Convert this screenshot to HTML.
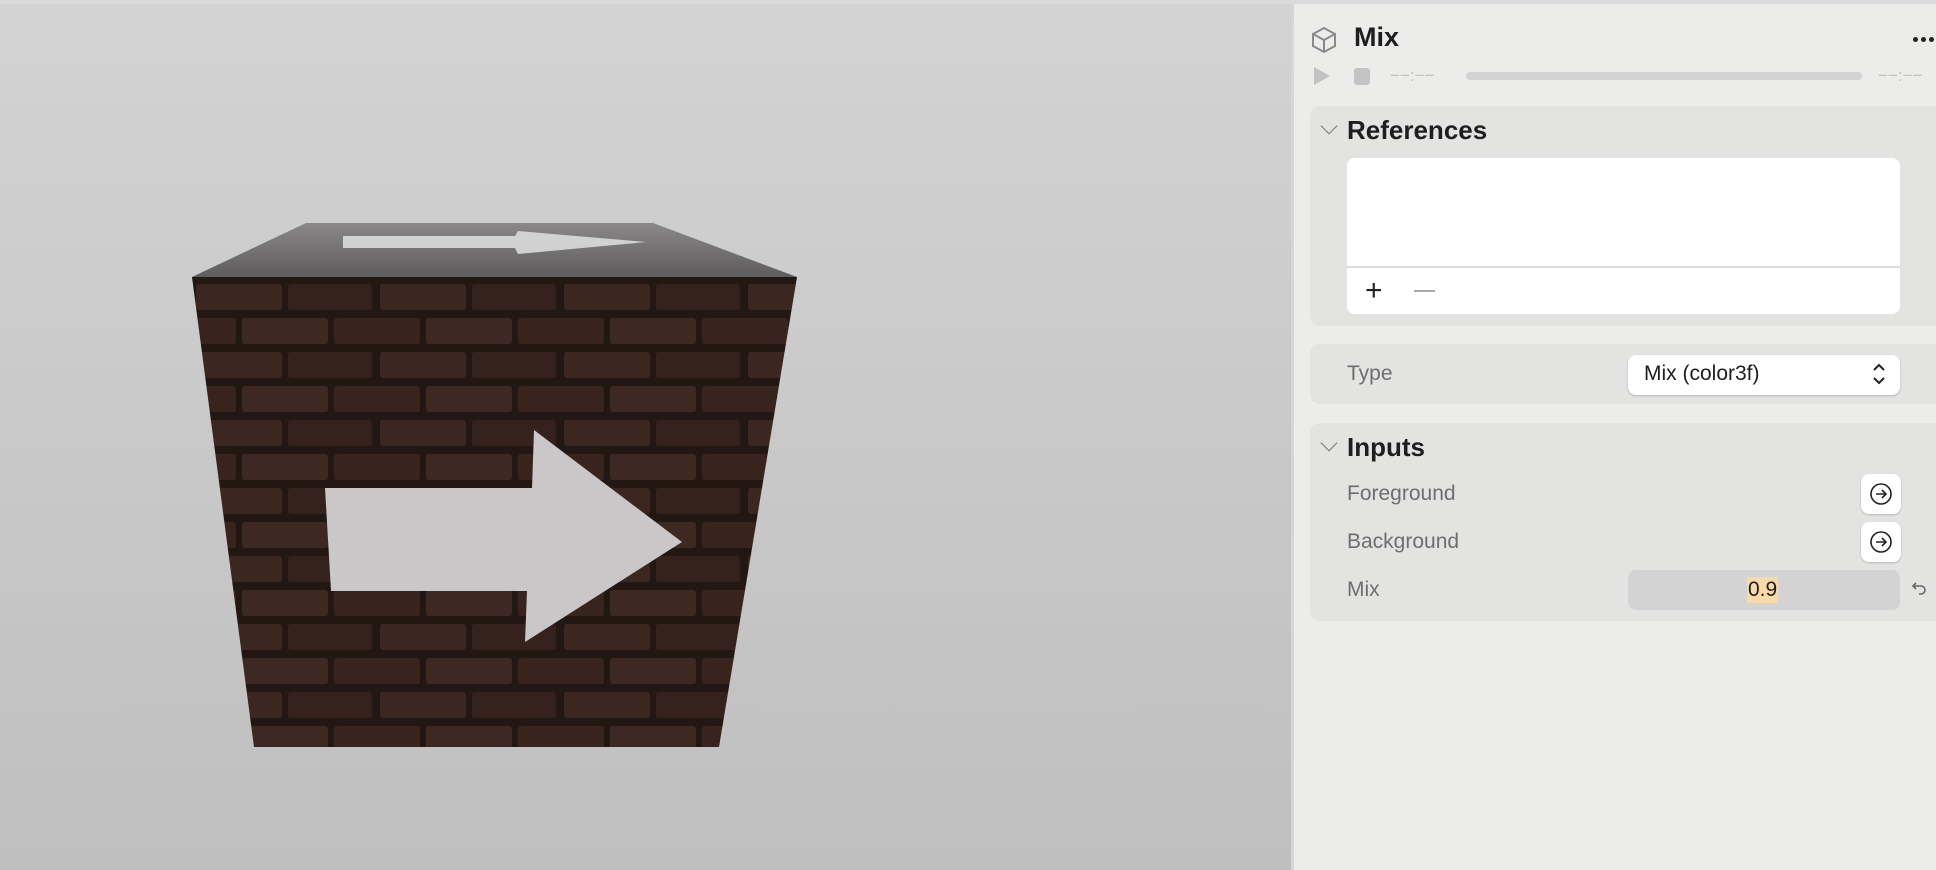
<!DOCTYPE html>
<html><head><meta charset="utf-8"><style>
*{margin:0;padding:0;box-sizing:border-box}
body{width:1936px;height:870px;overflow:hidden;position:relative;font-family:"Liberation Sans",sans-serif;background:#c8c8c8}
.vp{position:absolute;left:0;top:0;width:1291px;height:870px;background:linear-gradient(#d3d3d3,#bfbfbf)}
.topline{position:absolute;left:0;top:0;width:1936px;height:4px;background:#dadada}
.panel{position:absolute;left:1291px;top:4px;width:645px;height:866px;background:#ececeb;border-left:3px solid #d6d6d6}
.a{position:absolute}
.card{position:absolute;left:1310px;width:640px;background:#e3e3e2;border-radius:10px}
.lbl{position:absolute;font-size:21px;color:#6e6e6e}
.h{position:absolute;font-size:26px;font-weight:bold;color:#1e1e1e}
.chev{position:absolute;width:12px;height:12px;border-right:1.6px solid #777;border-bottom:1.6px solid #777;transform:rotate(45deg)}
.btn{position:absolute;left:1861px;width:40px;height:40px;background:#fff;border-radius:8px;box-shadow:0 1px 2px rgba(0,0,0,.2)}
.dot{position:absolute;top:37px;width:5px;height:5px;border-radius:50%;background:#222}
</style></head><body>
<div class="vp"></div>
<svg class="a" style="left:0;top:0" width="1291" height="870">
<defs>
<pattern id="br" width="184" height="68" patternUnits="userSpaceOnUse" x="192" y="280">
<rect width="184" height="68" fill="#221713"/>
<rect x="4" y="4" width="86" height="26" rx="3" fill="#3b2620"/>
<rect x="96" y="4" width="84" height="26" rx="3" fill="#36221c"/>
<rect x="-42" y="38" width="86" height="26" rx="3" fill="#38231d"/>
<rect x="50" y="38" width="86" height="26" rx="3" fill="#3e2822"/>
<rect x="142" y="38" width="86" height="26" rx="3" fill="#38231d"/>
</pattern>
<linearGradient id="tg" x1="0" y1="0" x2="0" y2="1"><stop offset="0" stop-color="#8a8888"/><stop offset="1" stop-color="#5e5c5c"/></linearGradient>
</defs>
<polygon points="306,223 653,223 797,277 192,277" fill="url(#tg)"/>
<polygon points="343,236 515,236 518,231 646,242 518,254 515,248 343,248" fill="#dcdcdc" opacity=".9"/>
<polygon points="192,277 797,277 719,747 254,747" fill="url(#br)"/>
<polygon points="325,488 532,488 534,430 682,542 525,642 527,591 331,591" fill="#c9c7c7"/>
</svg>
<div class="topline"></div>
<div class="panel"></div>
<svg class="a" style="left:1311px;top:26px" width="26" height="28" viewBox="0 0 26 28" fill="none" stroke="#8a8a8a" stroke-width="2"><path d="M13 2 L24 8 V20 L13 26 L2 20 V8 Z M2 8 L13 14 L24 8 M13 14 V26"/></svg>
<div class="h" style="left:1354px;top:22px;font-size:27px">Mix</div>
<div class="dot" style="left:1913px"></div><div class="dot" style="left:1921px"></div><div class="dot" style="left:1929px"></div>
<svg class="a" style="left:1312px;top:65px" width="20" height="22"><polygon points="2,2 18,11 2,20" fill="#c2c2c2"/></svg>
<div class="a" style="left:1354px;top:68px;width:16px;height:17px;background:#c4c4c4;border-radius:3px"></div>
<div class="a" style="left:1390px;top:66px;font-size:17px;color:#c0c0c0">−−:−−</div>
<div class="a" style="left:1466px;top:72px;width:396px;height:8px;background:#d3d3d3;border-radius:4px"></div>
<div class="a" style="left:1878px;top:66px;font-size:17px;color:#c0c0c0">−−:−−</div>

<div class="card" style="top:106px;height:220px"></div>
<div class="chev" style="left:1323px;top:120px"></div>
<div class="h" style="left:1347px;top:115px">References</div>
<div class="a" style="left:1347px;top:158px;width:553px;height:156px;background:#fff;border-radius:8px"></div>
<div class="a" style="left:1347px;top:266px;width:553px;height:2px;background:#dcdcdc"></div>
<div class="a" style="left:1365px;top:279px;font-size:30px;color:#222;line-height:24px">+</div>
<div class="a" style="left:1414px;top:290px;width:21px;height:2px;background:#aaa"></div>

<div class="card" style="top:344px;height:60px"></div>
<div class="lbl" style="left:1347px;top:362px">Type</div>
<div class="a" style="left:1628px;top:355px;width:272px;height:40px;background:#fff;border-radius:8px;box-shadow:0 1px 2px rgba(0,0,0,.2)"></div>
<div class="a" style="left:1644px;top:362px;font-size:21px;color:#1e1e1e">Mix (color3f)</div>
<svg class="a" style="left:1872px;top:362px" width="14" height="24" fill="none" stroke="#222" stroke-width="2"><path d="M2 8 L7 3 L12 8 M2 16 L7 21 L12 16"/></svg>

<div class="card" style="top:423px;height:198px"></div>
<div class="chev" style="left:1323px;top:437px"></div>
<div class="h" style="left:1347px;top:432px">Inputs</div>
<div class="lbl" style="left:1347px;top:482px">Foreground</div>
<div class="lbl" style="left:1347px;top:530px">Background</div>
<div class="lbl" style="left:1347px;top:578px">Mix</div>
<div class="btn" style="top:474px"></div>
<div class="btn" style="top:522px"></div>
<svg class="a" style="left:1869px;top:482px" width="24" height="24" fill="none" stroke="#222" stroke-width="1.6"><circle cx="12" cy="12" r="10"/><path d="M7 12 H17 M13 8 L17 12 L13 16"/></svg>
<svg class="a" style="left:1869px;top:530px" width="24" height="24" fill="none" stroke="#222" stroke-width="1.6"><circle cx="12" cy="12" r="10"/><path d="M7 12 H17 M13 8 L17 12 L13 16"/></svg>
<div class="a" style="left:1628px;top:570px;width:272px;height:40px;background:#d3d3d3;border-radius:8px"></div>
<div class="a" style="left:1747px;top:577px;padding:0 1px;background:#fad9a8;font-size:21px;color:#1e1e1e;line-height:26px">0.9</div>
<svg class="a" style="left:1911px;top:580px" width="16" height="18" fill="none" stroke="#666" stroke-width="1.6"><path d="M5 3 L2 6 L5 9 M2 6 H10 A4 4 0 0 1 10 14 H8"/></svg>
</body></html>
